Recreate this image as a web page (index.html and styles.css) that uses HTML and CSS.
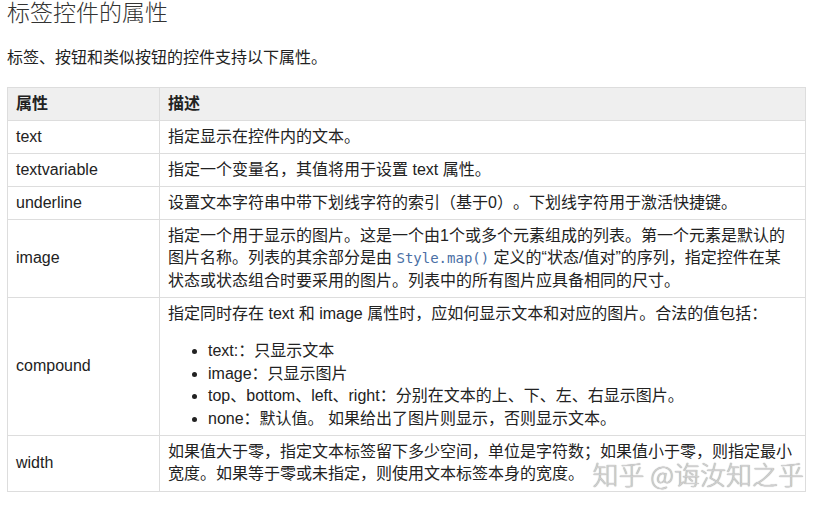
FILE: index.html
```html
<!DOCTYPE html>
<html lang="zh-CN">
<head>
<meta charset="UTF-8">
<meta name="viewport" content="width=device-width, initial-scale=1.0">
<title>标签控件的属性</title>
<link rel="stylesheet" href="styles.css">
</head>
<body>
<div class="page">
  <h2 class="title">标签控件的属性</h2>
  <p class="intro">标签、按钮和类似按钮的控件支持以下属性。</p>

  <table class="props">
    <thead>
      <tr>
        <th class="col-name">属性</th>
        <th>描述</th>
      </tr>
    </thead>
    <tbody>
      <tr>
        <td>text</td>
        <td>指定显示在控件内的文本。</td>
      </tr>
      <tr>
        <td>textvariable</td>
        <td>指定一个变量名，其值将用于设置 text 属性。</td>
      </tr>
      <tr>
        <td>underline</td>
        <td>设置文本字符串中带下划线字符的索引（基于0）。下划线字符用于激活快捷键。</td>
      </tr>
      <tr>
        <td>image</td>
        <td>指定一个用于显示的图片。这是一个由1个或多个元素组成的列表。第一个元素是默认的图片名称。列表的其余部分是由 <code>Style.map()</code> 定义的“状态/值对”的序列，指定控件在某状态或状态组合时要采用的图片。列表中的所有图片应具备相同的尺寸。</td>
      </tr>
      <tr>
        <td>compound</td>
        <td>
          <p>指定同时存在 text 和 image 属性时，应如何显示文本和对应的图片。合法的值包括：</p>
          <ul>
            <li>text:：只显示文本</li>
            <li>image：只显示图片</li>
            <li>top、bottom、left、right：分别在文本的上、下、左、右显示图片。</li>
            <li>none：默认值。 如果给出了图片则显示，否则显示文本。</li>
          </ul>
        </td>
      </tr>
      <tr>
        <td>width</td>
        <td>如果值大于零，指定文本标签留下多少空间，单位是字符数；如果值小于零，则指定最小宽度。如果等于零或未指定，则使用文本标签本身的宽度。</td>
      </tr>
    </tbody>
  </table>

  <div class="watermark">知乎 @诲汝知之乎</div>
</div>
</body>
</html>
```

FILE: styles.css
```css
/* page */
body {
  margin: 0;
  padding: 0;
  background: #fff;
  color: #222;
  font-family: "Liberation Sans", "Noto Sans CJK SC", Arial, sans-serif;
  text-spacing-trim: space-all;
}

.page {
  position: relative;
  width: 799px;
  padding: 0 7px;
}

.title {
  margin: 0;
  font-size: 23px;
  font-weight: 300;
  line-height: 26px;
  color: #333;
}

.intro {
  margin: 20px 0 17px;
  font-size: 16px;
  line-height: 24px;
}

/* table */
.props {
  width: 799px;
  border-collapse: collapse;
  font-size: 16px;
  line-height: 22.5px;
}

.props th,
.props td {
  border: 1px solid #ddd;
  padding: 4.75px 11px 4.75px 8px;
  text-align: left;
  vertical-align: middle;
}

.props th {
  background-color: #efefef;
  font-weight: bold;
}

.props .col-name {
  width: 135px;
}

.props tr > :first-child {
  padding-right: 8px;
}

.props code {
  font-family: "DejaVu Sans Mono", "Liberation Mono", monospace;
  font-size: 14px;
  color: #4a6fa5;
}

.props p {
  margin: 0;
}

.props ul {
  margin: 15px 0 0;
  padding-left: 40px;
}

/* watermark over the last row */
.watermark {
  position: absolute;
  right: 9px;
  bottom: 1px;
  font-family: "Noto Sans CJK SC", sans-serif;
  font-size: 26px;
  font-weight: 300;
  line-height: 34px;
  color: #d0d0d0;
  text-shadow: 0 0 1px #888, 0 0 2px #fff;
}
```
